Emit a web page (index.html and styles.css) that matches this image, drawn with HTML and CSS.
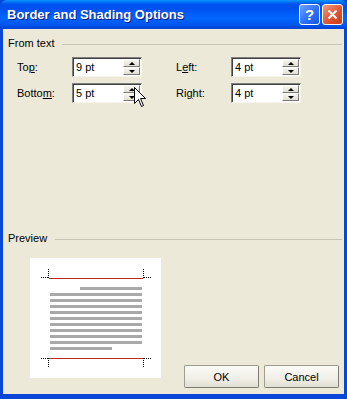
FILE: index.html
```html
<!DOCTYPE html>
<html lang="en">
<head>
  <meta charset="UTF-8">
  <title>Border and Shading Options</title>
  <link rel="stylesheet" href="styles.css">
</head>
<body>
  <div class="window">
    <div class="titlebar">
      <span class="title">Border and Shading Options</span>
      <span class="capbtn help">?</span>
      <span class="capbtn close">
        <svg width="11" height="11" viewBox="0 0 11 11"><path d="M1.5 1.5 L9.5 9.5 M9.5 1.5 L1.5 9.5" stroke="#fff" stroke-width="2" fill="none"/></svg>
      </span>
    </div>
    <div class="content">
      <div class="group-head">From text</div>
      <div class="fields">
        <label>To<u>p</u>:</label>
        <div class="spin"><span class="val">9 pt</span><span class="arrows"><i class="up"></i><i class="down"></i></span></div>
        <label class="col2">L<u>e</u>ft:</label>
        <div class="spin"><span class="val">4 pt</span><span class="arrows"><i class="up"></i><i class="down"></i></span></div>
        <label>Botto<u>m</u>:</label>
        <div class="spin"><span class="val">5 pt</span><span class="arrows"><i class="up"></i><i class="down"></i></span></div>
        <label class="col2">Ri<u>g</u>ht:</label>
        <div class="spin"><span class="val">4 pt</span><span class="arrows"><i class="up"></i><i class="down"></i></span></div>
      </div>
      <div class="group-head preview-head">Preview</div>
      <div class="bottom-row">
        <div class="preview">
          <svg width="131" height="120" viewBox="0 0 131 120">
            <g stroke="#000" stroke-width="1" stroke-dasharray="1 1" fill="none">
              <path d="M18.5 11 V20 M11 19.5 H18"/>
              <path d="M113.5 11 V20 M114 19.5 H121"/>
              <path d="M18.5 100 V110 M11 100.5 H18"/>
              <path d="M113.5 100 V110 M114 100.5 H121"/>
            </g>
            <path d="M19 20.5 H113 M19 100.5 H113" stroke="#b8281c" stroke-width="1"/>
            <g fill="#a9a9a9">
              <rect x="50" y="29" width="62" height="3"/>
              <rect x="20" y="35" width="92" height="3"/>
              <rect x="20" y="41" width="92" height="3"/>
              <rect x="20" y="47" width="92" height="3"/>
              <rect x="20" y="53" width="92" height="3"/>
              <rect x="20" y="59" width="92" height="3"/>
              <rect x="20" y="65" width="92" height="3"/>
              <rect x="20" y="71" width="92" height="3"/>
              <rect x="20" y="77" width="92" height="3"/>
              <rect x="20" y="83" width="92" height="3"/>
              <rect x="20" y="89" width="62" height="3"/>
            </g>
          </svg>
        </div>
        <div class="buttons">
          <button>OK</button>
          <button>Cancel</button>
        </div>
      </div>
    </div>
    <!-- mouse pointer sitting over the Bottom spinner -->
    <svg class="cursor" width="13" height="21" viewBox="0 0 13 21">
      <path d="M0.5 0.5 V16.5 L4.5 12.5 L7.5 19.5 L9.5 18.5 L6.5 11.5 L11.5 11.5 Z" fill="#fff" stroke="#000" stroke-width="1" stroke-linejoin="miter"/>
    </svg>
  </div>
</body>
</html>
```

FILE: styles.css
```css
* {
  margin: 0;
  padding: 0;
  box-sizing: border-box;
}
body {
  background: #fff;
  font-family: "Liberation Sans", Arial, sans-serif;
  font-size: 11px;
  color: #000;
}
.window {
  position: relative;
  width: 347px;
  height: 399px;
  display: flex;
  flex-direction: column;
  background: #0a46d8;
  padding: 0 3px 5px 3px;
}
.titlebar {
  height: 29px;
  margin: 0 -3px;
  padding: 0 4px 0 7px;
  display: flex;
  align-items: center;
  background: linear-gradient(to bottom, #0997ff 0px, #0053ee 4px, #0050ee 8px, #0066ff 18px, #0058f0 24px, #0042d8 29px);
  border-radius: 7px 7px 0 0;
}
.title {
  flex: 1;
  color: #fff;
  font-weight: bold;
  font-size: 13px;
  text-shadow: 1px 1px 0 #0a1883;
}
.capbtn {
  width: 21px;
  height: 21px;
  border: 1px solid #fff;
  border-radius: 3px;
  display: flex;
  align-items: center;
  justify-content: center;
  color: #fff;
  font-weight: bold;
  font-size: 15px;
}
.help {
  background: linear-gradient(135deg, #6aa0ff, #2a6cf5 60%, #1a55e0);
  margin-right: 2px;
}
.close {
  background: linear-gradient(135deg, #f29a80, #e0502e 60%, #c83a18);
}
.content {
  flex: 1;
  background: #ece9d8;
  display: flex;
  flex-direction: column;
}
.group-head {
  display: flex;
  align-items: center;
  gap: 8px;
  margin: 8px 2px 0 5px;
  line-height: 13px;
}
.group-head::after {
  content: "";
  flex: 1;
  border-top: 1px solid #c8c5b4;
  margin-top: 1px;
}
.fields {
  display: grid;
  grid-template-columns: 55px 70px 89px 70px;
  row-gap: 6px;
  margin: 7px 0 0 14px;
}
.fields label {
  display: flex;
  align-items: center;
  height: 20px;
}
.fields .col2 {
  padding-left: 34px;
}
.spin {
  height: 20px;
  display: flex;
  background: #fff;
  border-top: 1px solid #808080;
  border-left: 1px solid #808080;
  border-right: 1px solid #f4f3ee;
  border-bottom: 1px solid #f4f3ee;
  box-shadow: inset 1px 1px 0 #404040;
}
.val {
  flex: 1;
  padding: 3px 0 0 3px;
}
.arrows {
  width: 18px;
  display: flex;
  flex-direction: column;
  padding: 1px 1px 1px 0;
}
.arrows i {
  flex: 1;
  display: flex;
  align-items: center;
  justify-content: center;
  background: linear-gradient(to bottom, #f7f6f1, #e2dfd2);
  border: 1px solid #fff;
  border-right-color: #7a7a74;
  border-bottom-color: #7a7a74;
}
.up::before {
  content: "";
  border-left: 3px solid transparent;
  border-right: 3px solid transparent;
  border-bottom: 3px solid #000;
}
.down::before {
  content: "";
  border-left: 3px solid transparent;
  border-right: 3px solid transparent;
  border-top: 3px solid #000;
}
.preview-head {
  margin-top: 129px;
}
.bottom-row {
  display: flex;
  align-items: flex-end;
  margin-top: 13px;
  padding: 0 5px 6px 27px;
}
.preview {
  width: 131px;
  height: 120px;
  background: #fff;
  margin-bottom: 10px;
}
.preview svg {
  display: block;
}
.buttons {
  margin-left: auto;
  display: flex;
  gap: 5px;
}
button {
  width: 75px;
  height: 23px;
  font-family: "Liberation Sans", Arial, sans-serif;
  font-size: 11px;
  color: #000;
  background: linear-gradient(to bottom, #fbfbf8, #f0eee6 60%, #e2dfd3);
  border: 1px solid #a09d90;
  border-right-color: #7d7b70;
  border-bottom-color: #7d7b70;
  border-radius: 2px;
}
.cursor {
  position: absolute;
  left: 134px;
  top: 87px;
}
```
